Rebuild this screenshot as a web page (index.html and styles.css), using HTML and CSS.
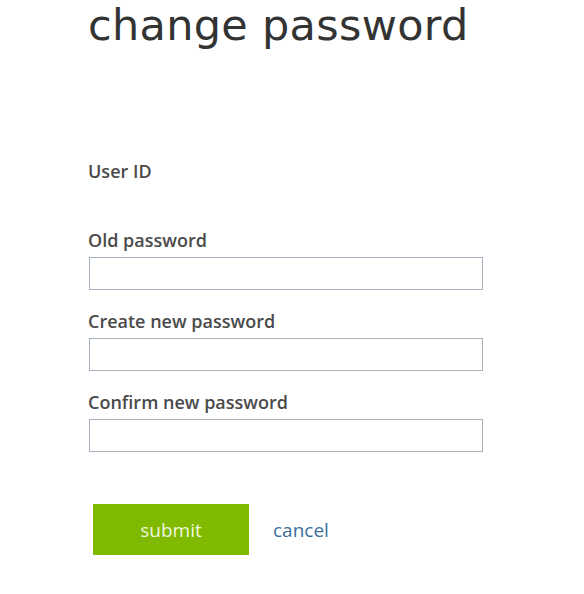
FILE: index.html
```html
<!DOCTYPE html>
<html>
<head>
<meta charset="utf-8">
<link rel="stylesheet" href="styles.css">
</head>
<body>
<div class="page">
  <h1 class="title">change password</h1>
  <form class="form">
    <div class="field userid">
      <div class="label">User ID</div>
      <div class="value"></div>
    </div>
    <div class="field">
      <label class="label">Old password</label>
      <input class="input" type="password">
    </div>
    <div class="field">
      <label class="label">Create new password</label>
      <input class="input" type="password">
    </div>
    <div class="field">
      <label class="label">Confirm new password</label>
      <input class="input" type="password">
    </div>
    <div class="actions">
      <button type="button" class="submit">submit</button>
      <a class="cancel" href="#">cancel</a>
    </div>
  </form>
</div>
</body>
</html>
```
FILE: styles.css
```css
html, body {
  margin: 0;
  padding: 0;
  background: #ffffff;
}
.page {
  padding-left: 88px;
  width: 394px;
}
.title {
  font-family: "DejaVu Sans", Verdana, sans-serif;
  font-weight: normal;
  font-size: 43px;
  line-height: 50px;
  color: #333333;
  margin: 0;
  padding-top: 0;
  letter-spacing: 0.3px;
}
.form {
  margin-top: 109px;
  font-family: "Open Sans", "Segoe UI", sans-serif;
}
.field {
  display: flex;
  flex-direction: column;
  margin-bottom: 19px;
}
.label {
  font-size: 18px;
  font-weight: 600;
  color: #4a4a4a;
  line-height: 24px;
  margin-bottom: 5px;
}
.value {
  height: 26px;
}
.userid .label {
  margin-bottom: 0;
}
.input {
  box-sizing: border-box;
  width: 394px;
  height: 33px;
  margin: 0 0 0 1px;
  border: 1px solid #a7b1bd;
  border-radius: 0;
  padding: 0 6px;
  background: #fff;
}
.actions {
  display: flex;
  align-items: center;
  margin-top: 52px;
  padding-left: 5px;
  gap: 24px;
}
.submit {
  width: 156px;
  height: 51px;
  border: none;
  background: #7fba00;
  color: #eef6df;
  font-family: "Open Sans", "Segoe UI", sans-serif;
  font-size: 19px;
  padding: 0;
}
.cancel {
  color: #3d6f9c;
  text-decoration: none;
  font-size: 19px;
}
```
